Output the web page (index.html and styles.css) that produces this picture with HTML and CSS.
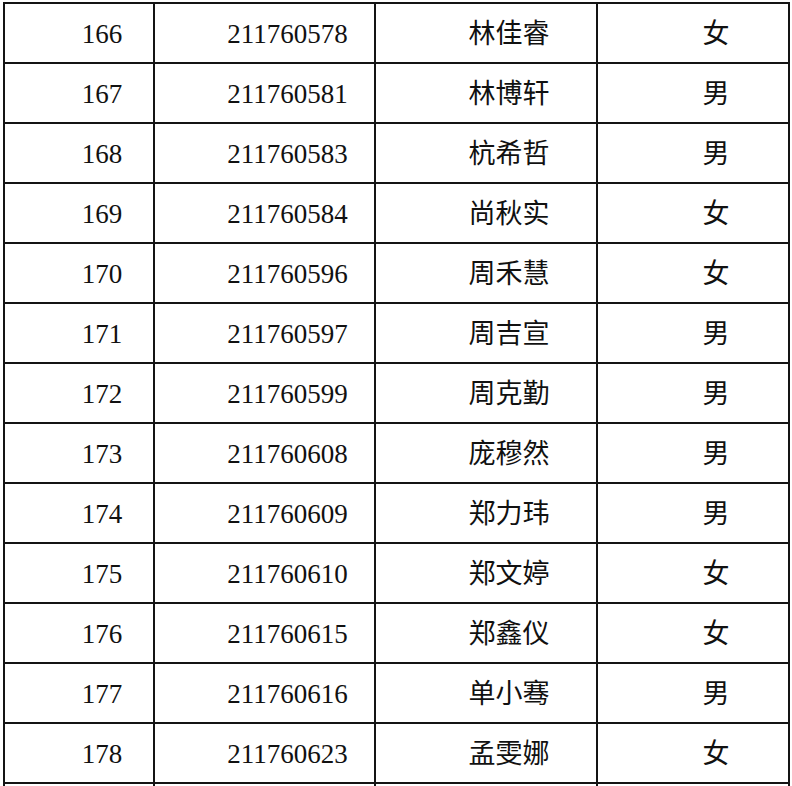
FILE: index.html
```html
<!DOCTYPE html>
<html lang="zh-CN">
<head>
<meta charset="utf-8">
<title>名单</title>
<link rel="stylesheet" href="styles.css">
</head>
<body>
<table class="roster">
  <colgroup>
    <col class="c-no">
    <col class="c-id">
    <col class="c-name">
    <col class="c-sex">
  </colgroup>
  <tbody>
    <tr><td>166</td><td>211760578</td><td>林佳睿</td><td>女</td></tr>
    <tr><td>167</td><td>211760581</td><td>林博轩</td><td>男</td></tr>
    <tr><td>168</td><td>211760583</td><td>杭希哲</td><td>男</td></tr>
    <tr><td>169</td><td>211760584</td><td>尚秋实</td><td>女</td></tr>
    <tr><td>170</td><td>211760596</td><td>周禾慧</td><td>女</td></tr>
    <tr><td>171</td><td>211760597</td><td>周吉宣</td><td>男</td></tr>
    <tr><td>172</td><td>211760599</td><td>周克勤</td><td>男</td></tr>
    <tr><td>173</td><td>211760608</td><td>庞穆然</td><td>男</td></tr>
    <tr><td>174</td><td>211760609</td><td>郑力玮</td><td>男</td></tr>
    <tr><td>175</td><td>211760610</td><td>郑文婷</td><td>女</td></tr>
    <tr><td>176</td><td>211760615</td><td>郑鑫仪</td><td>女</td></tr>
    <tr><td>177</td><td>211760616</td><td>单小骞</td><td>男</td></tr>
    <tr><td>178</td><td>211760623</td><td>孟雯娜</td><td>女</td></tr>
    <tr class="stub"><td></td><td></td><td></td><td></td></tr>
  </tbody>
</table>
</body>
</html>
```

FILE: styles.css
```css
html, body {
  margin: 0;
  padding: 0;
  background: #ffffff;
  overflow: hidden;
}

body {
  padding: 2px 0 0 3px;
}

.roster {
  border-collapse: collapse;
  table-layout: fixed;
  width: 785px;
  font-family: "Liberation Serif", "Noto Sans CJK SC", serif;
  font-size: 27px;
  color: #111111;
}

.c-no { width: 150px; }
.c-id { width: 221px; }
.c-name { width: 222px; }
.c-sex { width: 192px; }

.roster td {
  border: 2px solid #141414;
  height: 55px;
  padding: 3px 0 0 46px;
  text-align: center;
  vertical-align: middle;
  line-height: 1;
  white-space: nowrap;
}

.roster .stub td {
  height: 20px;
  border-bottom: none;
}
```
